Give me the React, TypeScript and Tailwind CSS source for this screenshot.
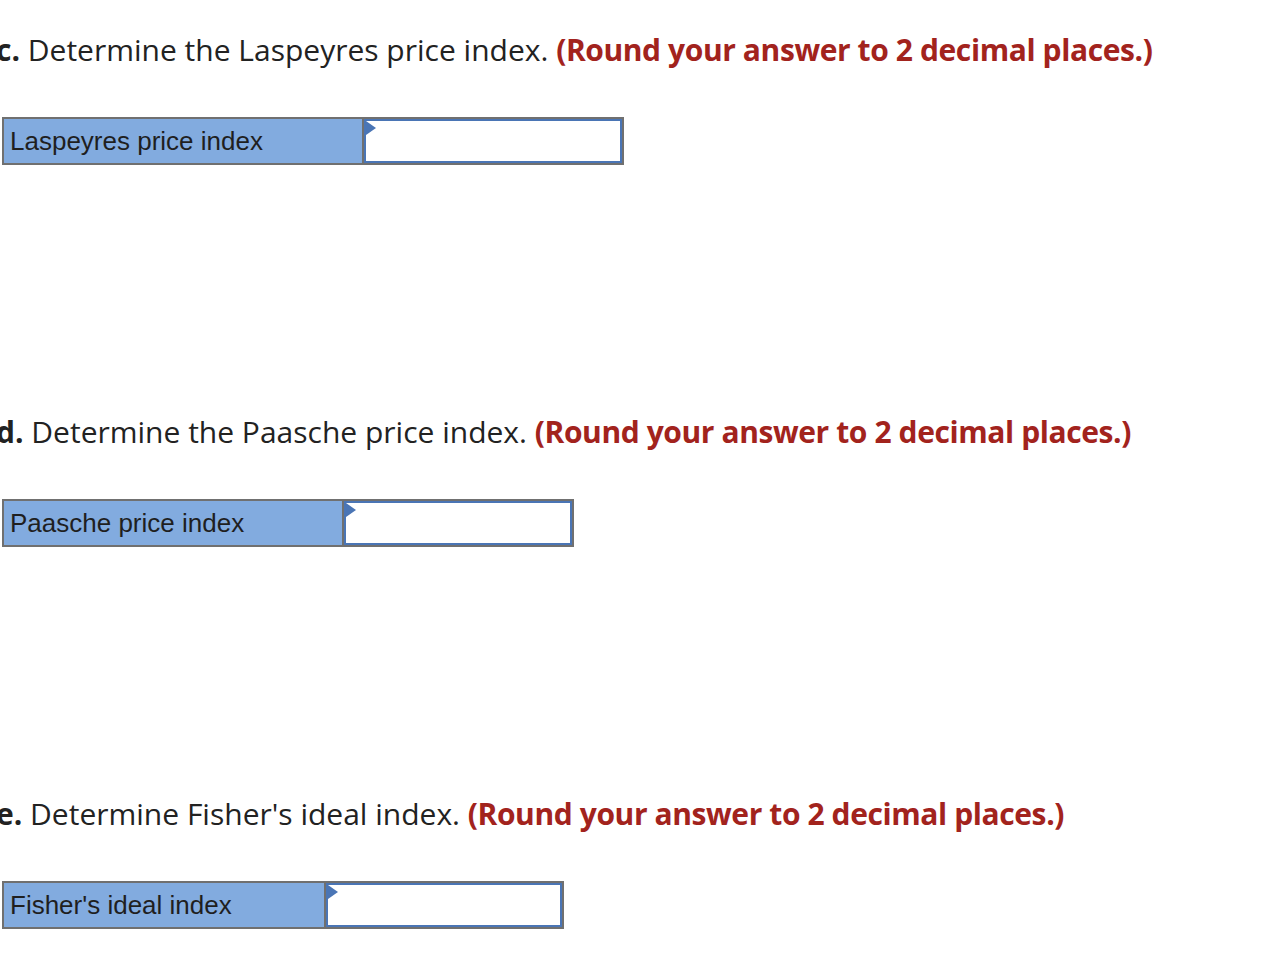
import React from "react";

type Part = {
  letter: string;
  prompt: string;
  label: string;
  labelWidth: number;
  tableWidth: number;
};

const parts: Part[] = [
  { letter: "c.", prompt: "Determine the Laspeyres price index.", label: "Laspeyres price index", labelWidth: 360, tableWidth: 622 },
  { letter: "d.", prompt: "Determine the Paasche price index.", label: "Paasche price index", labelWidth: 340, tableWidth: 572 },
  { letter: "e.", prompt: "Determine Fisher's ideal index.", label: "Fisher's ideal index", labelWidth: 322, tableWidth: 562 },
];

const AnswerRow = ({ part }: { part: Part }) => (
  <div
    className="ml-[2px] flex h-[48px] border-2 border-[#707070]"
    style={{ width: part.tableWidth }}
  >
    <div
      className="flex shrink-0 items-center border-r-2 border-[#707070] bg-[#82abdf] pl-[6px] text-[26px] text-[#1f1f1f] font-['Liberation_Sans',Arial,sans-serif]"
      style={{ width: part.labelWidth }}
    >
      {part.label}
    </div>
    <div className="relative flex-1 border-2 border-[#4a75b5] bg-white">
      <span className="absolute left-0 top-0 h-0 w-0 border-y-[7px] border-l-[10px] border-y-transparent border-l-[#4a75b5]" />
    </div>
  </div>
);

export default function App() {
  return (
    <div className="min-h-screen bg-white pt-[32px] font-['Open_Sans','Lato',sans-serif] overflow-hidden">
      {parts.map((part) => (
        <section key={part.letter} className="mb-[249px] last:mb-0">
          <h2 className="-ml-[4px] whitespace-nowrap text-[30px] leading-[36px] text-[#222]">
            <span className="font-bold">{part.letter}</span> {part.prompt}{" "}
            <span className="font-bold tracking-[-0.4px] text-[#a2231d]">
              (Round your answer to 2 decimal places.)
            </span>
          </h2>
          <div className="mt-[49px]">
            <AnswerRow part={part} />
          </div>
        </section>
      ))}
    </div>
  );
}
